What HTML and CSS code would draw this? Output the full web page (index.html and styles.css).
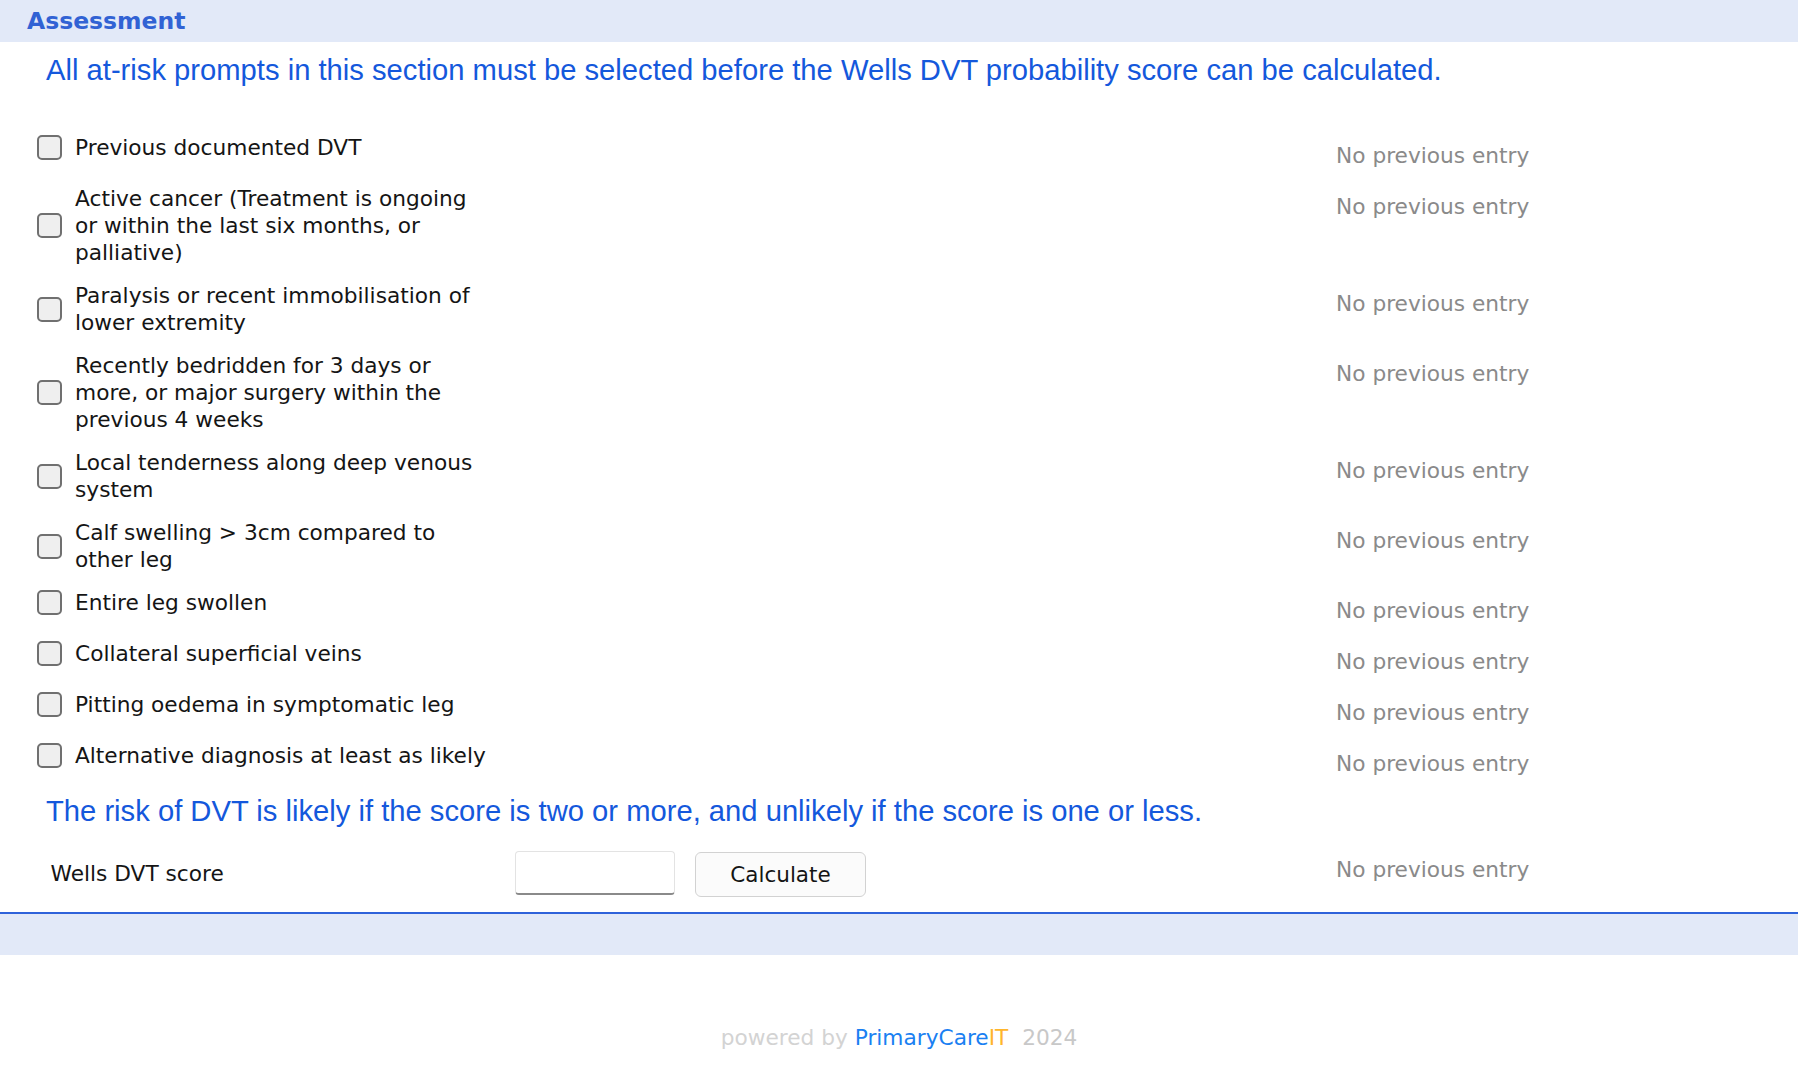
FILE: index.html
```html
<!DOCTYPE html>
<html lang="en">
<head>
<meta charset="utf-8">
<title>Assessment</title>
<link rel="stylesheet" href="styles.css">
</head>
<body>
<section class="panel">
  <h2 class="panel-title">Assessment</h2>
  <p class="note note-top">All at-risk prompts in this section must be selected before the Wells DVT probability score can be calculated.</p>

  <div class="prompts">
    <div class="prompt">
      <label class="prompt-choice"><input type="checkbox" class="tick"><span class="prompt-text">Previous documented DVT</span></label>
      <span class="history">No previous entry</span>
    </div>
    <div class="prompt">
      <label class="prompt-choice"><input type="checkbox" class="tick"><span class="prompt-text">Active cancer (Treatment is ongoing<br>or within the last six months, or<br>palliative)</span></label>
      <span class="history">No previous entry</span>
    </div>
    <div class="prompt">
      <label class="prompt-choice"><input type="checkbox" class="tick"><span class="prompt-text">Paralysis or recent immobilisation of<br>lower extremity</span></label>
      <span class="history">No previous entry</span>
    </div>
    <div class="prompt">
      <label class="prompt-choice"><input type="checkbox" class="tick"><span class="prompt-text">Recently bedridden for 3 days or<br>more, or major surgery within the<br>previous 4 weeks</span></label>
      <span class="history">No previous entry</span>
    </div>
    <div class="prompt">
      <label class="prompt-choice"><input type="checkbox" class="tick"><span class="prompt-text">Local tenderness along deep venous<br>system</span></label>
      <span class="history">No previous entry</span>
    </div>
    <div class="prompt">
      <label class="prompt-choice"><input type="checkbox" class="tick"><span class="prompt-text">Calf swelling &gt; 3cm compared to<br>other leg</span></label>
      <span class="history">No previous entry</span>
    </div>
    <div class="prompt">
      <label class="prompt-choice"><input type="checkbox" class="tick"><span class="prompt-text">Entire leg swollen</span></label>
      <span class="history">No previous entry</span>
    </div>
    <div class="prompt">
      <label class="prompt-choice"><input type="checkbox" class="tick"><span class="prompt-text">Collateral superficial veins</span></label>
      <span class="history">No previous entry</span>
    </div>
    <div class="prompt">
      <label class="prompt-choice"><input type="checkbox" class="tick"><span class="prompt-text">Pitting oedema in symptomatic leg</span></label>
      <span class="history">No previous entry</span>
    </div>
    <div class="prompt">
      <label class="prompt-choice"><input type="checkbox" class="tick"><span class="prompt-text">Alternative diagnosis at least as likely</span></label>
      <span class="history">No previous entry</span>
    </div>
  </div>

  <p class="note note-bottom">The risk of DVT is likely if the score is two or more, and unlikely if the score is one or less.</p>

  <div class="score-row">
    <div class="score-controls">
      <span class="score-label">Wells DVT score</span>
      <input type="text" class="score-input" aria-label="Wells DVT score">
      <button type="button" class="calc-btn">Calculate</button>
    </div>
    <span class="history history-score">No previous entry</span>
  </div>
</section>
<div class="panel-foot"></div>

<footer class="credit">powered by <span class="brand">PrimaryCare<span class="brand-it">IT</span></span>&nbsp; <span class="year">2024</span></footer>
</body>
</html>
```

FILE: styles.css
```css
html, body {
  margin: 0;
  padding: 0;
  background: #ffffff;
}

body {
  font-family: "DejaVu Sans", Verdana, sans-serif;
  color: #151515;
}

/* section header band */
.panel-title {
  margin: 0;
  height: 42px;
  line-height: 42px;
  padding-left: 27px;
  background: #e2e9f8;
  color: #3162d4;
  font-family: "DejaVu Sans", Verdana, sans-serif;
  font-weight: bold;
  font-size: 23.5px;
}

/* blue guidance notes */
.note {
  margin: 0;
  padding-left: 46px;
  font-family: "Liberation Sans", Arial, sans-serif;
  font-size: 29.2px;
  line-height: 34px;
  color: #1458dc;
  white-space: nowrap;
}

.note-top {
  margin-top: 11px;
}

.note-bottom {
  margin-top: 9px;
}

/* checklist of prompts */
.prompts {
  margin-top: 39px;
  padding-left: 37px;
}

.prompt {
  display: grid;
  grid-template-columns: 1299px auto;
  align-items: start;
  padding: 8px 0;
}

.prompt-choice {
  display: flex;
  align-items: center;
  gap: 13px;
  font-size: 21.7px;
  line-height: 27px;
  color: #151515;
  white-space: nowrap;
}

.tick {
  appearance: none;
  -webkit-appearance: none;
  flex: none;
  box-sizing: border-box;
  width: 25px;
  height: 25px;
  margin: 0;
  border: 2px solid #707070;
  border-radius: 5px;
  background: #efefef;
}

.history {
  padding-top: 8px;
  font-size: 21.7px;
  line-height: 27px;
  color: #8a8a8a;
  white-space: nowrap;
}

/* score entry */
.score-row {
  display: grid;
  grid-template-columns: 1299px auto;
  align-items: start;
  margin-left: 37px;
  margin-top: 14px;
  padding: 8px 0;
}

.score-controls {
  display: flex;
  align-items: center;
  height: 46px;
  padding-left: 13.5px;
}

.score-label {
  width: 464.5px;
  flex: none;
  font-size: 21.7px;
  line-height: 27px;
  color: #151515;
}

.score-input {
  box-sizing: border-box;
  width: 160px;
  height: 44px;
  margin: 0;
  padding: 0 8px;
  border: 1px solid #e3e3e3;
  border-bottom: 2px solid #8a8a8a;
  border-radius: 4px;
  background: #ffffff;
  font-size: 20px;
}

.calc-btn {
  box-sizing: border-box;
  width: 171px;
  height: 45px;
  margin: 3px 0 0 20px;
  padding: 0;
  border: 1px solid #d2d2d2;
  border-radius: 6px;
  background: #fbfbfb;
  font-family: "DejaVu Sans", Verdana, sans-serif;
  font-size: 21.5px;
  color: #151515;
}

.history-score {
  padding-top: 5.5px;
}

.panel-foot {
  margin-top: 8px;
  height: 41px;
  border-top: 2px solid #2e62da;
  background: #e2e9f8;
}

/* footer credit line */
.credit {
  margin-top: 69px;
  text-align: center;
  font-size: 21.7px;
  line-height: 27px;
  color: #d3d3d3;
  white-space: nowrap;
}

.brand {
  color: #1a80f2;
}

.brand-it {
  color: #ffb52b;
}

.year {
  color: #c8c8c8;
}
```
